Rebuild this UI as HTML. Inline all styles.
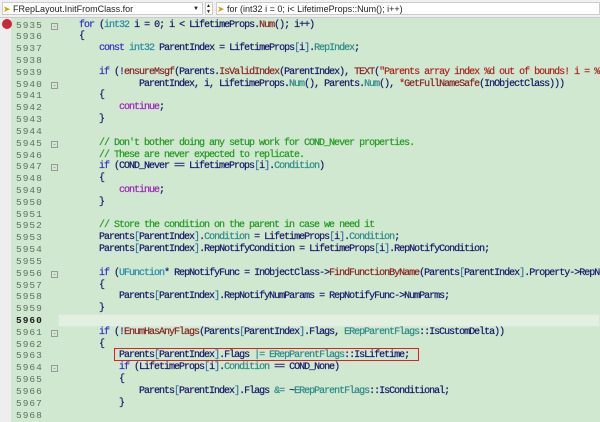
<!DOCTYPE html><html><head><style>
html,body{margin:0;width:600px;height:422px;overflow:hidden}
body{background:#cfe8cf;font-family:"Liberation Mono",monospace;position:relative}
.tb{position:absolute;left:0;top:0;width:600px;height:17px;background:#f0f0f0;border-bottom:1px solid #ccc}
.cb{position:absolute;top:2px;height:13px;background:#fff;border:1px solid #ccc;font:9px "Liberation Sans",sans-serif;color:#222;line-height:13px;white-space:nowrap;overflow:hidden;box-sizing:border-box}
.gut{position:absolute;left:0;top:18px;width:11px;height:404px;background:#eee}
.ln{position:absolute;left:16px;width:40px;font-size:9.5px;letter-spacing:1px;color:#5f6f5f;line-height:11.82px}
#L{position:absolute;left:0;top:0;width:600px;height:422px;overflow:hidden}
.c{position:absolute;left:59px;font-size:10px;letter-spacing:-1px;line-height:11.82px;white-space:pre;color:#16166a;-webkit-text-stroke:0.2px}
.k{color:#3030c8}.t{color:#2b8aa8}.f{color:#8a2222}.s{color:#b02020}.m{color:#2b8a8a}.cm{color:#229a22}.p{color:#a020c0}.b{color:#3a7aa8}
.fold{position:absolute;left:51px;width:5px;height:5px;border:1px solid #999;font-size:6px;line-height:5px;text-align:center;color:#666}
</style></head><body>
<div class="tb">
<div class="cb" style="left:2px;width:201px"><span style="color:#d8a000">&#10148;</span> FRepLayout.InitFromClass.for<span style="position:absolute;right:3px;font-size:6px">&#9660;</span></div>
<div class="cb" style="left:205px;width:8px;font-size:5px;line-height:6px">&#9650;<br>&#9660;</div>
<div class="cb" style="left:216px;width:384px"><span style="color:#d8a000">&#10148;</span> for (int32 i = 0; i&lt; LifetimeProps::Num(); i++)</div>
</div>
<div class="gut"></div>
<div style="position:absolute;left:2px;top:19px;width:10px;height:10px;border-radius:50%;background:#c8283a"></div>
<div style="position:absolute;left:58px;top:314px;width:540px;height:11px;background:#e2f0e2;border:1px solid #d8e8d8"></div>
<div id="L"></div>
<div style="position:absolute;left:114px;top:348px;width:303px;height:11px;border:1px solid #e02020"></div>
<script>
var lines=[
'    <span class=k>for</span> (<span class=t>int32</span> i = 0; i &lt; LifetimeProps.<span class=f>Num</span>(); i++)',
'    {',
'        <span class=k>const</span> <span class=t>int32</span> ParentIndex = LifetimeProps<span class=b>[</span>i<span class=b>]</span>.<span class=m>RepIndex</span>;',
'',
'        <span class=k>if</span> (!<span class=f>ensureMsgf</span>(Parents.<span class=f>IsValidIndex</span>(ParentIndex), <span class=f>TEXT</span>(<span class=s>"Parents array index %d out of bounds! i = %d</span>',
'                ParentIndex, i, LifetimeProps.<span class=m>Num</span>(), Parents.<span class=m>Num</span>(), <span class=s>*</span><span class=f>GetFullNameSafe</span>(InObjectClass)))',
'        {','            <span class=p>continue</span>;','        }','',
'        <span class=cm>// Don\'t bother doing any setup work for COND_Never properties.</span>',
'        <span class=cm>// These are never expected to replicate.</span>',
'        <span class=k>if</span> (COND_Never == LifetimeProps<span class=b>[</span>i<span class=b>]</span>.<span class=m>Condition</span>)',
'        {','            <span class=p>continue</span>;','        }','',
'        <span class=cm>// Store the condition on the parent in case we need it</span>',
'        Parents<span class=b>[</span>ParentIndex<span class=b>]</span>.<span class=m>Condition</span> = LifetimeProps<span class=b>[</span>i<span class=b>]</span>.<span class=m>Condition</span>;',
'        Parents<span class=b>[</span>ParentIndex<span class=b>]</span>.RepNotifyCondition = LifetimeProps<span class=b>[</span>i<span class=b>]</span>.RepNotifyCondition;',
'',
'        <span class=k>if</span> (<span class=t>UFunction</span>* RepNotifyFunc = InObjectClass-&gt;<span class=f>FindFunctionByName</span>(Parents<span class=b>[</span>ParentIndex<span class=b>]</span>.Property-&gt;RepNotifyFunc))',
'        {',
'            Parents<span class=b>[</span>ParentIndex<span class=b>]</span>.RepNotifyNumParams = RepNotifyFunc-&gt;NumParms;',
'        }','',
'        <span class=k>if</span> (!<span class=f>EnumHasAnyFlags</span>(Parents<span class=b>[</span>ParentIndex<span class=b>]</span>.Flags, <span class=m>ERepParentFlags</span>::IsCustomDelta))',
'        {',
'            Parents<span class=b>[</span>ParentIndex<span class=b>]</span>.Flags <span class=m>|=</span> <span class=m>ERepParentFlags</span>::IsLifetime;',
'            <span class=k>if</span> (LifetimeProps<span class=b>[</span>i<span class=b>]</span>.<span class=m>Condition</span> == COND_None)',
'            {',
'                Parents<span class=b>[</span>ParentIndex<span class=b>]</span>.Flags <span class=m>&amp;=</span> ~<span class=m>ERepParentFlags</span>::IsConditional;',
'            }',''];
var folds={0:1,5:1,10:1,12:1,21:1,26:1,29:1};
var h='';
for(var i=0;i<lines.length;i++){var y=19.5+i*11.82;
h+='<div class=ln style="top:'+y+'px'+(i==25?';color:#222;font-weight:bold':'')+'">'+(5935+i)+'</div>';
h+='<div class=c style="top:'+y+'px">'+lines[i]+'</div>';
if(folds[i])h+='<div class=fold style="top:'+(y+3)+'px">-</div>';}
document.getElementById('L').innerHTML=h;
</script>
</body></html>
